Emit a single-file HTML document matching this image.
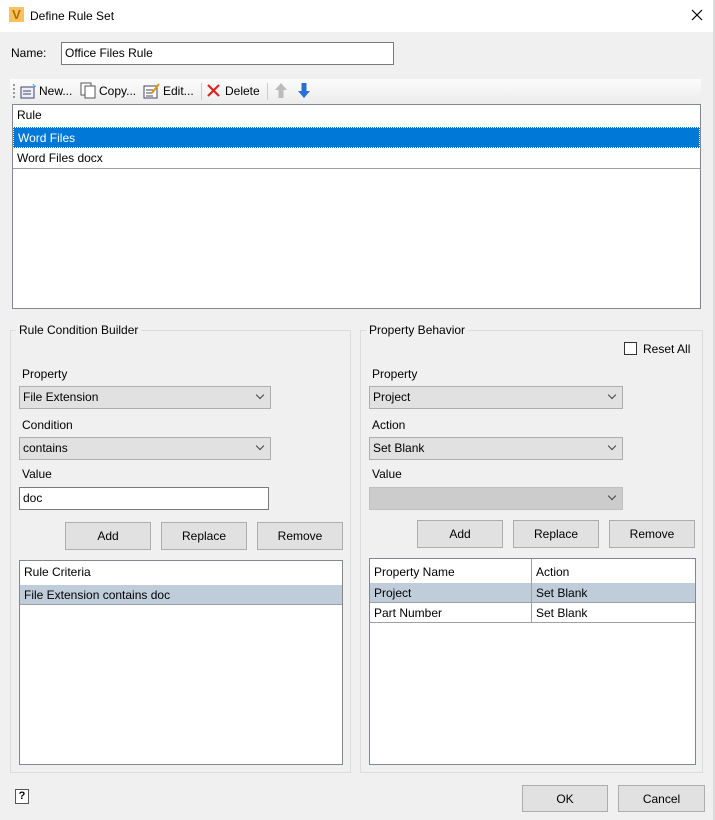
<!DOCTYPE html>
<html><head><meta charset="utf-8"><style>
*{box-sizing:border-box;margin:0;padding:0}
body{width:715px;height:820px;overflow:hidden;background:#f0f0f0;font-family:"Liberation Sans",sans-serif;font-size:12px;color:#000;position:relative}
.a{position:absolute}
.t{position:absolute;white-space:nowrap;line-height:14px}
.sel{position:absolute;background:#e1e1e1;border:1px solid #adadad;height:23px;padding:3px 0 0 3px}
.sel:after{content:"";position:absolute;right:7px;top:5px;width:5px;height:5px;border-right:1px solid #444;border-bottom:1px solid #444;transform:rotate(45deg)}
.inp{position:absolute;background:#fff;border:1px solid #7a7a7a;height:23px;padding:3px 0 0 3px}
.btn{position:absolute;background:#e1e1e1;border:1px solid #adadad;height:28px;text-align:center;line-height:26px}
.grp{position:absolute;border:1px solid #dcdcdc}
.lst{position:absolute;background:#fff;border:1px solid #828790}
.row{position:absolute;left:0;right:0;height:21px;padding:3px 0 0 4px;border-bottom:1px solid #a0a0a0}
</style></head><body>
<div class="a" style="left:0;top:0;width:713px;height:32px;background:#fff"></div>
<div class="a" style="left:713px;top:0;width:2px;height:820px;background:#dcdcdc"></div>
<div class="a" style="left:9px;top:7px;width:15px;height:15px;background:#f6c160;color:#b36b00;font-weight:bold;font-size:13px;text-align:center;line-height:15px">V</div>
<div class="t" style="left:30px;top:9px">Define Rule Set</div>
<svg class="a" style="left:691px;top:9px" width="12" height="12"><path d="M1 1L11 11M11 1L1 11" stroke="#000" stroke-width="1.2"/></svg>

<div class="t" style="left:11px;top:46px">Name:</div>
<div class="inp" style="left:61px;top:42px;width:333px">Office Files Rule</div>

<div class="a" style="left:10px;top:79px;width:691px;height:25px;background:linear-gradient(#fcfcfc,#ececec)"></div>
<div class="a" style="left:13px;top:84px;width:2px;height:14px;border-left:2px dotted #999"></div>
<svg class="a" style="left:20px;top:83px" width="18" height="16"><rect x="1" y="4" width="13" height="11" fill="#eef" stroke="#446"/><path d="M3 8h8M3 11h8" stroke="#446"/><path d="M13 1l2 3M16 3l-3 1" stroke="#39f"/></svg>
<div class="t" style="left:39px;top:84px">New...</div>
<svg class="a" style="left:80px;top:82px" width="17" height="17"><rect x="1" y="1" width="10" height="12" fill="#fff" stroke="#555"/><rect x="5" y="4" width="10" height="12" fill="#fff" stroke="#555"/></svg>
<div class="t" style="left:99px;top:84px">Copy...</div>
<svg class="a" style="left:143px;top:82px" width="18" height="17"><rect x="1" y="4" width="13" height="12" fill="#fff" stroke="#446"/><path d="M3 8h7M3 11h7M3 14h7" stroke="#446"/><path d="M9 11L16 2" stroke="#d90" stroke-width="2"/></svg>
<div class="t" style="left:163px;top:84px">Edit...</div>
<div class="a" style="left:201px;top:83px;width:1px;height:17px;background:#ccc"></div>
<svg class="a" style="left:206px;top:83px" width="15" height="15"><path d="M2 2L13 13M13 2L2 13" stroke="#d22" stroke-width="2.2"/></svg>
<div class="t" style="left:225px;top:84px">Delete</div>
<div class="a" style="left:267px;top:83px;width:1px;height:17px;background:#ccc"></div>
<svg class="a" style="left:274px;top:82px" width="14" height="17"><path d="M7 1L13 8H9.5V16H4.5V8H1Z" fill="#bbb"/></svg>
<svg class="a" style="left:297px;top:82px" width="14" height="17"><path d="M7 16L13 9H9.5V1H4.5V9H1Z" fill="#2a6fd6"/></svg>

<div class="lst" style="left:12px;top:104px;width:689px;height:205px">
<div class="row" style="top:0;border-bottom:none">Rule</div>
<div class="row" style="top:22px;height:21px;background:#0078d7;color:#fff;border:1px dotted #fff">Word Files</div>
<div class="row" style="top:43px">Word Files docx</div>
</div>

<div class="grp" style="left:10px;top:330px;width:341px;height:443px"></div>
<div class="t" style="left:16px;top:323px;background:#f0f0f0;padding:0 3px">Rule Condition Builder</div>
<div class="t" style="left:22px;top:367px">Property</div>
<div class="sel" style="left:19px;top:386px;width:252px">File Extension</div>
<div class="t" style="left:22px;top:418px">Condition</div>
<div class="sel" style="left:19px;top:437px;width:252px">contains</div>
<div class="t" style="left:22px;top:467px">Value</div>
<div class="inp" style="left:19px;top:487px;width:250px">doc</div>
<div class="btn" style="left:65px;top:522px;width:86px">Add</div>
<div class="btn" style="left:161px;top:522px;width:86px">Replace</div>
<div class="btn" style="left:257px;top:522px;width:86px">Remove</div>
<div class="lst" style="left:19px;top:560px;width:324px;height:205px">
<div class="row" style="top:1px;border-bottom:none">Rule Criteria</div>
<div class="row" style="top:24px;height:20px;background:#bfcddb;border-bottom:1px solid #a0a0a0">File Extension contains doc</div>
</div>

<div class="grp" style="left:360px;top:330px;width:343px;height:443px"></div>
<div class="t" style="left:366px;top:323px;background:#f0f0f0;padding:0 3px">Property Behavior</div>
<div class="a" style="left:624px;top:342px;width:13px;height:13px;background:#fff;border:1px solid #333"></div>
<div class="t" style="left:643px;top:342px">Reset All</div>
<div class="t" style="left:372px;top:367px">Property</div>
<div class="sel" style="left:369px;top:386px;width:254px">Project</div>
<div class="t" style="left:372px;top:418px">Action</div>
<div class="sel" style="left:369px;top:437px;width:254px">Set Blank</div>
<div class="t" style="left:372px;top:467px">Value</div>
<div class="sel" style="left:369px;top:487px;width:254px;background:#ccc;border-color:#bfbfbf"></div>
<div class="btn" style="left:417px;top:520px;width:86px">Add</div>
<div class="btn" style="left:513px;top:520px;width:86px">Replace</div>
<div class="btn" style="left:609px;top:520px;width:86px">Remove</div>
<div class="lst" style="left:369px;top:558px;width:327px;height:207px">
<div class="row" style="top:0;height:24px;padding-top:6px;border-bottom:none">Property Name</div>
<div class="t" style="left:166px;top:6px">Action</div>
<div class="row" style="top:24px;height:20px;background:#bfcddb;border-bottom:1px solid #a0a0a0">Project</div>
<div class="t" style="left:166px;top:27px">Set Blank</div>
<div class="row" style="top:44px;height:20px">Part Number</div>
<div class="t" style="left:166px;top:47px">Set Blank</div>
<div class="a" style="left:161px;top:0;width:1px;height:64px;background:#a0a0a0"></div>
</div>

<div class="a" style="left:15px;top:789px;width:14px;height:15px;border:1px solid #555;background:#fff;font-size:11px;font-weight:bold;text-align:center;line-height:13px">?</div>
<div class="btn" style="left:522px;top:785px;width:86px;height:27px">OK</div>
<div class="btn" style="left:618px;top:785px;width:87px;height:27px">Cancel</div>
</body></html>
